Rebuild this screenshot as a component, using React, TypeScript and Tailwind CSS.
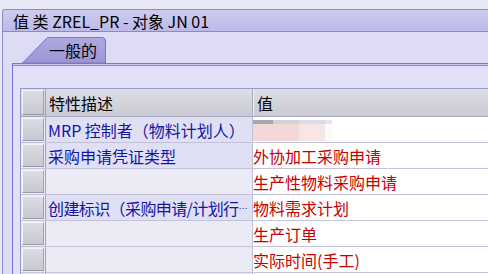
const rows: { label: string; value: string; redacted?: boolean; cut?: boolean }[] = [
  { label: 'MRP 控制者（物料计划人）', value: '', redacted: true },
  { label: '采购申请凭证类型', value: '外协加工采购申请' },
  { label: '', value: '生产性物料采购申请' },
  { label: '创建标识（采购申请/计划行', value: '物料需求计划', cut: true },
  { label: '', value: '生产订单' },
  { label: '', value: '实际时间(手工)' },
  { label: '', value: '' },
];

function SelectorCell() {
  return (
    <div className="w-[25px] shrink-0 border-r border-[#a4a4b8] p-[1px]">
      <div className="h-full bg-gradient-to-b from-[#dcdce4] to-[#c8c8d2] border border-t-[#f4f4f8] border-l-[#f4f4f8] border-r-[#a0a0b0] border-b-[#9a9aaa]"></div>
    </div>
  );
}

function Tab({ label }: { label: string }) {
  return (
    <div className="relative w-[84px] h-[26px]">
      <svg width="84" height="26" viewBox="0 0 84 26" className="block">
        <defs>
          <linearGradient id="tabfill" x1="0" y1="0" x2="0" y2="1">
            <stop offset="0" stopColor="#aea8e2" />
            <stop offset="1" stopColor="#9c96d6" />
          </linearGradient>
        </defs>
        <path
          d="M0.5,26 L25.5,0.5 L80,0.5 Q83.5,0.5 83.5,4 L83.5,26 Z"
          fill="url(#tabfill)"
          stroke="#7c76c0"
          strokeWidth="1"
        />
      </svg>
      <span className="absolute left-[27px] top-[3px] text-[16px] leading-[20px] text-black">{label}</span>
    </div>
  );
}

export default function App() {
  return (
    <div className="w-[488px] h-[274px] overflow-hidden bg-[#e9e8f5] pt-[9px] pl-[2px] font-['Noto_Sans_CJK_SC','Noto_Sans',sans-serif]">
      <div className="h-[265px] flex flex-col bg-[#dedcf4] border-l border-t border-[#8e8ac6] rounded-tl-[3px]">
        {/* Title bar */}
        <div className="h-[22px] shrink-0 flex items-center pl-[10px] bg-gradient-to-b from-[#cfccf0] to-[#bdb9e8] border-b border-[#8e8ac6] rounded-tl-[3px]">
          <span className="text-[16px] leading-[20px] text-black whitespace-nowrap">值 类 ZREL_PR - 对象 JN 01</span>
        </div>

        {/* Tab strip */}
        <div className="h-[31px] shrink-0 flex items-end pl-[19px]">
          <Tab label="一般的" />
        </div>

        {/* Panel */}
        <div className="flex-1 ml-[9px] bg-[#e2e0f6] border-l border-t border-[#7d76c4] shadow-[inset_0_1px_0_#cac6ee,inset_0_2px_0_#8e88cc] pl-[7px] pt-[24px]">
          <div className="border-l border-t border-[#9a96d0] bg-[#ebebf5]">
            {/* Header */}
            <div className="h-[28px] flex border-b border-[#a8a8c0] bg-gradient-to-b from-[#dedee6] to-[#cacad4]">
              <SelectorCell />
              <div className="w-[207px] shrink-0 border-r border-[#a8a8bc] shadow-[1px_0_0_#f0f0f4] flex items-center pl-[3px] text-[16px] text-black">
                特性描述
              </div>
              <div className="flex-1 flex items-center pl-[4px] text-[16px] text-black">值</div>
            </div>

            {/* Rows */}
            {rows.map((r, i) => (
              <div key={i} className="h-[26px] flex border-b border-[#c4c2da]">
                <SelectorCell />
                <div
                  className={
                    'w-[207px] shrink-0 border-r border-[#c0bed8] flex items-center pl-[2px] text-[16px] text-[#1414a8] min-w-0 whitespace-nowrap ' +
                    (r.label ? 'bg-[#e0e0f4]' : 'bg-[#ebebf5]')
                  }
                >
                  <span className={r.cut ? 'tracking-[-0.6px]' : ''}>{r.label}</span>
                  {r.cut && <span className="text-[9px] leading-none self-end mb-[7px] tracking-[-1px]">…</span>}
                </div>
                <div className="flex-1 bg-white flex items-center text-[16px] text-[#c80000] whitespace-nowrap">
                  {r.redacted ? (
                    <div className="flex flex-col self-start pt-[3px]">
                      <div className="flex h-[4px]">
                        <div className="w-[20px] bg-[#a8a8b2]"></div>
                        <div className="w-[26px] bg-[#d2d2de]"></div>
                        <div className="w-[26px] bg-[#dcdce6]"></div>
                        <div className="w-[7px] bg-[#e4e4ec]"></div>
                      </div>
                      <div className="flex h-[17px]">
                        <div className="w-[46px] bg-[#f4d8d8]"></div>
                        <div className="w-[26px] bg-[#f8e6e6]"></div>
                        <div className="w-[7px] bg-[#fafafa]"></div>
                      </div>
                    </div>
                  ) : (
                    <span>{r.value}</span>
                  )}
                </div>
              </div>
            ))}
          </div>
        </div>
      </div>
    </div>
  );
}
